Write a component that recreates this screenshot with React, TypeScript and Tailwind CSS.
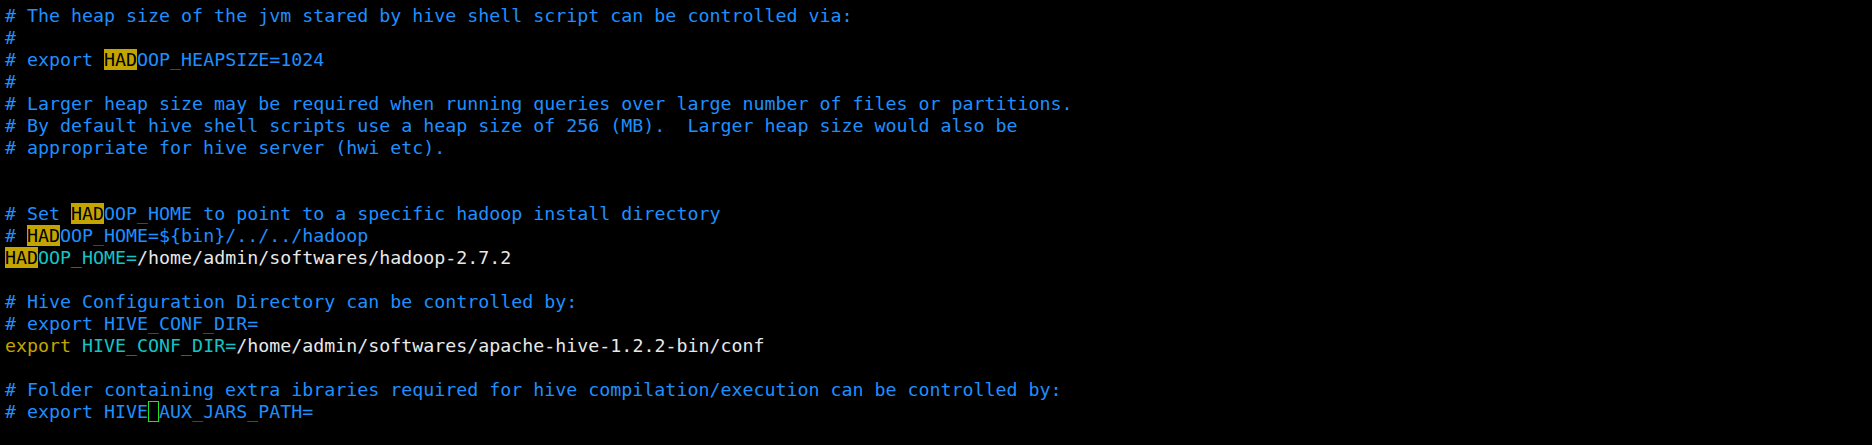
import React from "react";

type Seg = { t: string; c?: "cm" | "hl" | "cy" | "wh" | "yl" | "cur" };

const cls: Record<string, string> = {
  cm: "text-[#1e8fff]",
  hl: "bg-[#c4a500] text-black",
  cy: "text-[#15c4c4]",
  wh: "text-[#e8e8e8]",
  yl: "text-[#c4a500]",
  cur: "text-[#e8e8e8] outline outline-1 -outline-offset-1 outline-[#22e022]",
};

const lines: Seg[][] = [
  [{ t: "# The heap size of the jvm stared by hive shell script can be controlled via:", c: "cm" }],
  [{ t: "#", c: "cm" }],
  [{ t: "# export ", c: "cm" }, { t: "HAD", c: "hl" }, { t: "OOP_HEAPSIZE=1024", c: "cm" }],
  [{ t: "#", c: "cm" }],
  [{ t: "# Larger heap size may be required when running queries over large number of files or partitions.", c: "cm" }],
  [{ t: "# By default hive shell scripts use a heap size of 256 (MB).  Larger heap size would also be", c: "cm" }],
  [{ t: "# appropriate for hive server (hwi etc).", c: "cm" }],
  [],
  [],
  [{ t: "# Set ", c: "cm" }, { t: "HAD", c: "hl" }, { t: "OOP_HOME to point to a specific hadoop install directory", c: "cm" }],
  [{ t: "# ", c: "cm" }, { t: "HAD", c: "hl" }, { t: "OOP_HOME=${bin}/../../hadoop", c: "cm" }],
  [{ t: "HAD", c: "hl" }, { t: "OOP_HOME=", c: "cy" }, { t: "/home/admin/softwares/hadoop-2.7.2", c: "wh" }],
  [],
  [{ t: "# Hive Configuration Directory can be controlled by:", c: "cm" }],
  [{ t: "# export HIVE_CONF_DIR=", c: "cm" }],
  [{ t: "export", c: "yl" }, { t: " " }, { t: "HIVE_CONF_DIR=", c: "cy" }, { t: "/home/admin/softwares/apache-hive-1.2.2-bin/conf", c: "wh" }],
  [],
  [{ t: "# Folder containing extra ibraries required for hive compilation/execution can be controlled by:", c: "cm" }],
  [{ t: "# export HIVE", c: "cm" }, { t: "_", c: "cur" }, { t: "AUX_JARS_PATH=", c: "cm" }],
];

export default function App() {
  return (
    <div className="h-[445px] w-[1872px] overflow-hidden bg-black pl-[5px] pt-[5px] font-['DejaVu_Sans_Mono',monospace] text-[18.3px] leading-[22px] whitespace-pre">
      {lines.map((segs, i) => (
        <div key={i} className="h-[22px]">
          {segs.map((s, j) => (
            <span key={j} className={s.c ? cls[s.c] : ""}>
              {s.t}
            </span>
          ))}
        </div>
      ))}
    </div>
  );
}
